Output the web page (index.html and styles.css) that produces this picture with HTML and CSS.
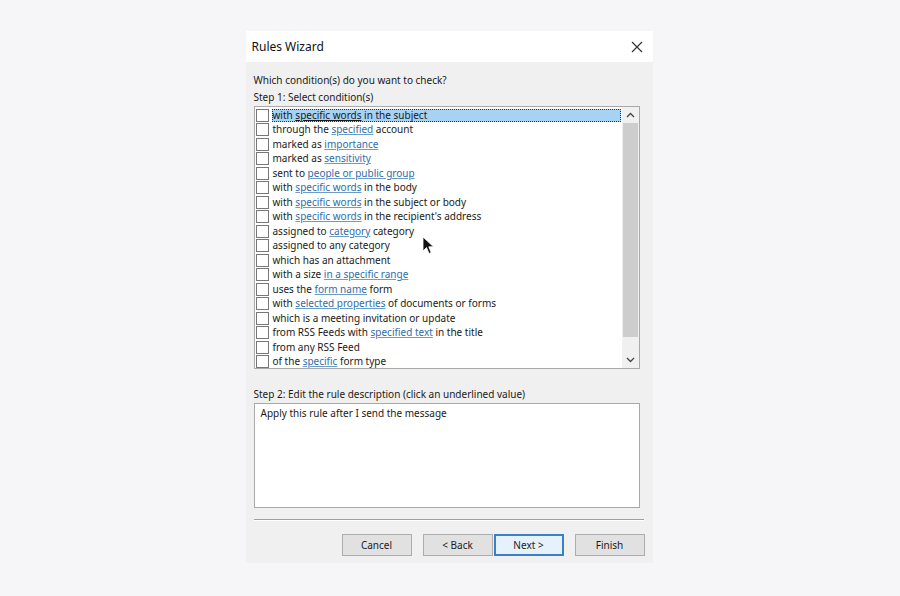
FILE: index.html
```html
<!DOCTYPE html>
<html lang="en">
<head>
    <meta charset="UTF-8">
    <meta name="viewport" content="width=device-width, initial-scale=1.0">
    <title>Rules Wizard</title>
    <link rel="stylesheet" href="styles.css">
</head>
<body>

<div class="dialog">
    <div class="titlebar">
        <span class="title">Rules Wizard</span>
        <svg class="close" width="12" height="12" viewBox="0 0 12 12">
            <path d="M1 1 L11 11 M11 1 L1 11" stroke="#333" stroke-width="1.2" fill="none"/>
        </svg>
    </div>

    <div class="content">
        <div class="label first">Which condition(s) do you want to check?</div>
        <div class="label">Step 1: Select condition(s)</div>

        <div class="listbox">
            <div class="items">
                <div class="item"><span class="check"></span><span class="text selected">with <u>specific words</u> in the subject</span></div>
                <div class="item"><span class="check"></span><span class="text">through the <a>specified</a> account</span></div>
                <div class="item"><span class="check"></span><span class="text">marked as <a>importance</a></span></div>
                <div class="item"><span class="check"></span><span class="text">marked as <a>sensitivity</a></span></div>
                <div class="item"><span class="check"></span><span class="text">sent to <a>people or public group</a></span></div>
                <div class="item"><span class="check"></span><span class="text">with <a>specific words</a> in the body</span></div>
                <div class="item"><span class="check"></span><span class="text">with <a>specific words</a> in the subject or body</span></div>
                <div class="item"><span class="check"></span><span class="text">with <a>specific words</a> in the recipient's address</span></div>
                <div class="item"><span class="check"></span><span class="text">assigned to <a>category</a> category</span></div>
                <div class="item"><span class="check"></span><span class="text">assigned to any category</span></div>
                <div class="item"><span class="check"></span><span class="text">which has an attachment</span></div>
                <div class="item"><span class="check"></span><span class="text">with a size <a>in a specific range</a></span></div>
                <div class="item"><span class="check"></span><span class="text">uses the <a>form name</a> form</span></div>
                <div class="item"><span class="check"></span><span class="text">with <a>selected properties</a> of documents or forms</span></div>
                <div class="item"><span class="check"></span><span class="text">which is a meeting invitation or update</span></div>
                <div class="item"><span class="check"></span><span class="text">from RSS Feeds with <a>specified text</a> in the title</span></div>
                <div class="item"><span class="check"></span><span class="text">from any RSS Feed</span></div>
                <div class="item"><span class="check"></span><span class="text">of the <a>specific</a> form type</span></div>
            </div>
            <div class="scrollbar">
                <div class="arrow">
                    <svg width="9" height="6" viewBox="0 0 9 6"><path d="M1 5 L4.5 1.5 L8 5" stroke="#444" stroke-width="1.3" fill="none"/></svg>
                </div>
                <div class="track"><div class="thumb"></div></div>
                <div class="arrow">
                    <svg width="9" height="6" viewBox="0 0 9 6"><path d="M1 1 L4.5 4.5 L8 1" stroke="#444" stroke-width="1.3" fill="none"/></svg>
                </div>
            </div>
        </div>

        <div class="label step2">Step 2: Edit the rule description (click an underlined value)</div>
        <div class="description">Apply this rule after I send the message</div>

        <div class="separator"></div>

        <div class="buttons">
            <button>Cancel</button>
            <div class="pair">
                <button>&lt; Back</button>
                <button class="default">Next &gt;</button>
            </div>
            <button>Finish</button>
        </div>
    </div>
</div>

<svg class="cursor" width="14" height="20" viewBox="0 0 14 20">
    <path d="M1 1 L1 15 L4.5 11.5 L7 17.5 L9.2 16.6 L6.8 10.8 L11.5 10.8 Z" fill="#111" stroke="#fff" stroke-width="0.8"/>
</svg>

</body>
</html>
```

FILE: styles.css
```css
body {
    margin: 0;
    background-color: #f6f6f9;
    font-family: 'Noto Sans', 'Open Sans', sans-serif;
    font-size: 10px;
    color: #1a1a1a;
    display: flex;
    justify-content: center;
    padding-top: 31px;
    height: 565px;
    position: relative;
}

.dialog {
    width: 407px;
    height: 532px;
    margin-left: -2px;
    display: flex;
    flex-direction: column;
}

.titlebar {
    height: 31px;
    background-color: #ffffff;
    display: flex;
    align-items: center;
    justify-content: space-between;
    padding: 0 10px 0 6px;
}

.title {
    font-size: 12px;
    color: #111;
}

.content {
    flex: 1;
    background-color: #f0f0f0;
    padding: 9px 8px 0 8px;
}

.label {
    height: 18px;
    line-height: 18px;
}

.label.first {
    height: 17px;
}

.label.step2 {
    margin-top: 17px;
    height: 16px;
    line-height: 16px;
}

.listbox {
    width: 386px;
    height: 263px;
    box-sizing: border-box;
    border: 1px solid #a9a9a9;
    background-color: #ffffff;
    display: flex;
}

.items {
    flex: 1;
    padding-top: 1px;
}

.item {
    height: 14.5px;
    display: flex;
    align-items: center;
    white-space: nowrap;
}

.check {
    width: 11px;
    height: 11px;
    border: 1px solid #777;
    background-color: #fff;
    margin: 0 3px 0 1px;
    flex-shrink: 0;
}

.text {
    padding: 0 1px;
    line-height: 13px;
}

.text.selected {
    flex: 1;
    background-color: #a6d2f4;
    outline: 1px dotted #333;
    outline-offset: -1px;
    margin-right: 1px;
}

.text u {
    text-decoration: underline;
}

.text a {
    color: #2f6da8;
    text-decoration: underline;
    text-decoration-color: #6f9cc6;
}

.scrollbar {
    width: 17px;
    display: flex;
    flex-direction: column;
    background-color: #f0f0f0;
}

.arrow {
    height: 16px;
    display: flex;
    align-items: center;
    justify-content: center;
}

.track {
    flex: 1;
    padding: 0 1px;
}

.thumb {
    height: 214px;
    background-color: #cdcdcd;
}

.description {
    width: 386px;
    height: 105px;
    box-sizing: border-box;
    border: 1px solid #a9a9a9;
    background-color: #ffffff;
    padding: 2px 6px;
    margin-top: 1px;
}

.separator {
    width: 390px;
    height: 0;
    border-top: 1px solid #a0a0a0;
    border-bottom: 1px solid #ffffff;
    margin-top: 11px;
}

.buttons {
    display: flex;
    justify-content: flex-end;
    gap: 11px;
    margin-top: 13px;
    width: 391px;
}

.pair {
    display: flex;
    gap: 1px;
}

button {
    width: 70px;
    height: 22px;
    box-sizing: border-box;
    font-family: inherit;
    font-size: 10px;
    color: #1a1a1a;
    background-color: #e1e1e1;
    border: 1px solid #adadad;
    padding: 0;
}

button.default {
    border: 2px solid #3b7fc4;
    background-color: #e5f1fb;
}

.cursor {
    position: absolute;
    left: 422px;
    top: 236px;
}
```
